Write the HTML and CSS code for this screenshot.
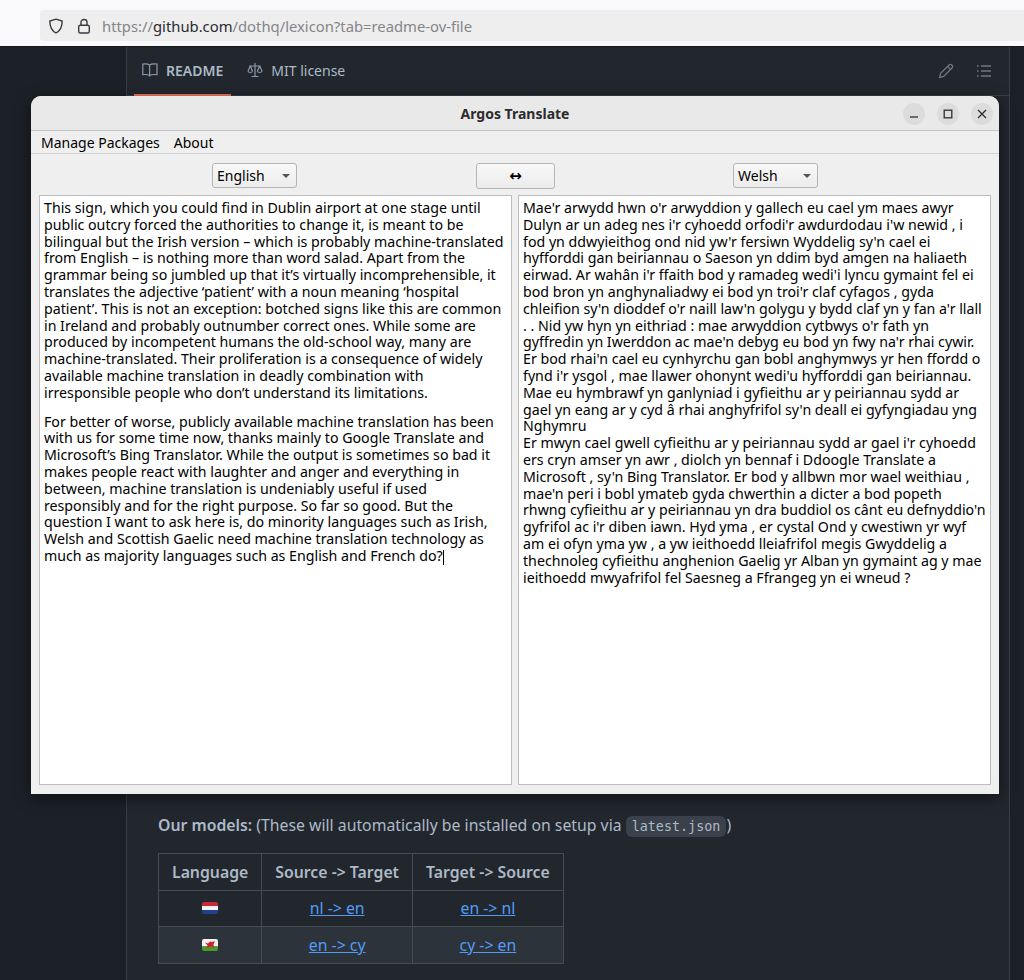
FILE: index.html
```html
<!DOCTYPE html>
<html lang="en">
<head>
    <meta charset="UTF-8">
    <meta name="viewport" content="width=device-width, initial-scale=1.0">
    <title>Argos Translate</title>
    <link rel="stylesheet" href="styles.css">
</head>
<body>

    <!-- Browser toolbar -->
    <div class="toolbar">
        <div class="urlbar">
            <svg class="url-icon" width="18" height="18" viewBox="0 0 18 18" fill="none" stroke="#3a3a3f" stroke-width="1.4">
                <path d="M9 2.2 L15.2 4 C15.2 10 13.6 13.6 9 16 C4.4 13.6 2.8 10 2.8 4 Z"/>
            </svg>
            <svg class="url-icon" width="16" height="18" viewBox="0 0 16 18" fill="none" stroke="#3a3a3f" stroke-width="1.4">
                <rect x="2.7" y="8.2" width="10.6" height="7.8" rx="1.6"/>
                <path d="M5 8 V5.2 C5 1.6 11 1.6 11 5.2 V8"/>
            </svg>
            <span class="url-text">https://<b>github.com</b>/dothq/lexicon?tab=readme-ov-file</span>
        </div>
    </div>

    <!-- GitHub page behind the window -->
    <div class="page">
        <div class="readme">
            <div class="readme-nav">
                <div class="tab tab-active">
                    <svg width="16" height="16" viewBox="0 0 16 16" fill="none" stroke="#8b98a8" stroke-width="1.2">
                        <path d="M7.6 3 C6 1.8 3 1.8 0.8 2 V12.6 C3 12.4 6 12.4 7.6 13.6 C9.2 12.4 12.6 12.4 15 12.6 V2 C12.6 1.8 9.2 1.8 7.6 3 Z M7.6 3 V14.6"/>
                    </svg>
                    README
                </div>
                <div class="tab">
                    <svg width="16" height="16" viewBox="0 0 16 16" fill="none" stroke="#8b98a8" stroke-width="1.2">
                        <path d="M8 1 V14.5 M4.6 14.5 H11.4 M2.2 4 H13.8 M3.4 4 L1 9 C1.4 11 5 11 5.4 9 L3.4 4 M12.6 4 L10.4 9 C10.8 11 14.6 11 15 9 L12.6 4"/>
                    </svg>
                    MIT license
                </div>
                <div class="nav-tools">
                    <svg width="16" height="16" viewBox="0 0 16 16" fill="none" stroke="#6e7885" stroke-width="1.3">
                        <path d="M1.6 14.4 L2.6 10.4 L10.8 2.2 C11.8 1.2 13 1.2 13.8 2 C14.8 3 14.8 4.2 13.8 5.2 L5.6 13.4 Z M9.6 3.4 L12.6 6.4"/>
                    </svg>
                    <svg width="16" height="16" viewBox="0 0 16 16" fill="none" stroke="#6e7885" stroke-width="1.3">
                        <path d="M5 3 H15 M5 8 H15 M5 13 H15 M1 3 H2.6 M1 8 H2.6 M1 13 H2.6"/>
                    </svg>
                </div>
            </div>
            <div class="readme-body">
                <p class="models"><b>Our models:</b> (These will automatically be installed on setup via <code>latest.json</code>)</p>
                <table class="models-table">
                    <tr>
                        <th>Language</th>
                        <th>Source -&gt; Target</th>
                        <th>Target -&gt; Source</th>
                    </tr>
                    <tr>
                        <td>
                            <svg class="flag" width="16" height="12" viewBox="0 0 16 12">
                                <rect width="16" height="4" fill="#c8273c"/>
                                <rect y="4" width="16" height="4" fill="#f2f2f2"/>
                                <rect y="8" width="16" height="4" fill="#22408c"/>
                            </svg>
                        </td>
                        <td><a href="#">nl -&gt; en</a></td>
                        <td><a href="#">en -&gt; nl</a></td>
                    </tr>
                    <tr class="row-alt">
                        <td>
                            <svg class="flag" width="16" height="12" viewBox="0 0 16 12">
                                <rect width="16" height="7.5" fill="#f2f2f2"/>
                                <rect y="7.5" width="16" height="4.5" fill="#4c9a2a"/>
                                <path d="M3 3.5 L6 4.5 L8 2.5 L10 3 L13 2 L11.5 5.5 L12 9 L10 7.5 L7 8 L5 9.5 L5.5 6.5 Z" fill="#d0202e"/>
                            </svg>
                        </td>
                        <td><a href="#">en -&gt; cy</a></td>
                        <td><a href="#">cy -&gt; en</a></td>
                    </tr>
                </table>
            </div>
        </div>
    </div>

    <!-- Argos Translate window -->
    <div class="window">
        <div class="titlebar">
            <span class="title">Argos Translate</span>
            <div class="win-buttons">
                <div class="win-btn">
                    <svg width="10" height="10" viewBox="0 0 10 10" fill="none" stroke="#2e2e2e" stroke-width="1.3"><path d="M1 8 H9"/></svg>
                </div>
                <div class="win-btn">
                    <svg width="10" height="10" viewBox="0 0 10 10" fill="none" stroke="#2e2e2e" stroke-width="1.3"><rect x="1.2" y="1.2" width="7.6" height="7.6"/></svg>
                </div>
                <div class="win-btn">
                    <svg width="10" height="10" viewBox="0 0 10 10" fill="none" stroke="#2e2e2e" stroke-width="1.3"><path d="M1 1 L9 9 M9 1 L1 9"/></svg>
                </div>
            </div>
        </div>
        <div class="menubar">
            <span>Manage Packages</span>
            <span>About</span>
        </div>
        <div class="controls">
            <div class="combo combo-en">English<span class="caret"></span></div>
            <div class="swap">↔</div>
            <div class="combo combo-cy">Welsh<span class="caret"></span></div>
        </div>
        <div class="panes">
            <div class="pane">
                <p>This sign, which you could find in Dublin airport at one stage until<br>
                public outcry forced the authorities to change it, is meant to be<br>
                bilingual but the Irish version – which is probably machine-translated<br>
                from English – is nothing more than word salad. Apart from the<br>
                grammar being so jumbled up that it’s virtually incomprehensible, it<br>
                translates the adjective ‘patient’ with a noun meaning ‘hospital<br>
                patient’. This is not an exception: botched signs like this are common<br>
                in Ireland and probably outnumber correct ones. While some are<br>
                produced by incompetent humans the old-school way, many are<br>
                machine-translated. Their proliferation is a consequence of widely<br>
                available machine translation in deadly combination with<br>
                irresponsible people who don’t understand its limitations.</p>
                <p>For better of worse, publicly available machine translation has been<br>
                with us for some time now, thanks mainly to Google Translate and<br>
                Microsoft’s Bing Translator. While the output is sometimes so bad it<br>
                makes people react with laughter and anger and everything in<br>
                between, machine translation is undeniably useful if used<br>
                responsibly and for the right purpose. So far so good. But the<br>
                question I want to ask here is, do minority languages such as Irish,<br>
                Welsh and Scottish Gaelic need machine translation technology as<br>
                much as majority languages such as English and French do?<span class="cursor"></span></p>
            </div>
            <div class="pane">
                <p>Mae'r arwydd hwn o'r arwyddion y gallech eu cael ym maes awyr<br>
                Dulyn ar un adeg nes i'r cyhoedd orfodi'r awdurdodau i'w newid , i<br>
                fod yn ddwyieithog ond nid yw'r fersiwn Wyddelig sy'n cael ei<br>
                hyfforddi gan beiriannau o Saeson yn ddim byd amgen na haliaeth<br>
                eirwad. Ar wahân i'r ffaith bod y ramadeg wedi'i lyncu gymaint fel ei<br>
                bod bron yn anghynaliadwy ei bod yn troi'r claf cyfagos , gyda<br>
                chleifion sy'n dioddef o'r naill law'n golygu y bydd claf yn y fan a'r llall<br>
                . . Nid yw hyn yn eithriad : mae arwyddion cytbwys o'r fath yn<br>
                gyffredin yn Iwerddon ac mae'n debyg eu bod yn fwy na'r rhai cywir.<br>
                Er bod rhai'n cael eu cynhyrchu gan bobl anghymwys yr hen ffordd o<br>
                fynd i'r ysgol , mae llawer ohonynt wedi'u hyfforddi gan beiriannau.<br>
                Mae eu hymbrawf yn ganlyniad i gyfieithu ar y peiriannau sydd ar<br>
                gael yn eang ar y cyd â rhai anghyfrifol sy'n deall ei gyfyngiadau yng<br>
                Nghymru<br>
                Er mwyn cael gwell cyfieithu ar y peiriannau sydd ar gael i'r cyhoedd<br>
                ers cryn amser yn awr , diolch yn bennaf i Ddoogle Translate a<br>
                Microsoft , sy'n Bing Translator. Er bod y allbwn mor wael weithiau ,<br>
                mae'n peri i bobl ymateb gyda chwerthin a dicter a bod popeth<br>
                rhwng cyfieithu ar y peiriannau yn dra buddiol os cânt eu defnyddio'n<br>
                gyfrifol ac i'r diben iawn. Hyd yma , er cystal Ond y cwestiwn yr wyf<br>
                am ei ofyn yma yw , a yw ieithoedd lleiafrifol megis Gwyddelig a<br>
                thechnoleg cyfieithu anghenion Gaelig yr Alban yn gymaint ag y mae<br>
                ieithoedd mwyafrifol fel Saesneg a Ffrangeg yn ei wneud ?</p>
            </div>
        </div>
    </div>

</body>
</html>
```

FILE: styles.css
```css
* {
    margin: 0;
    padding: 0;
    box-sizing: border-box;
}

html, body {
    height: 980px;
    overflow: hidden;
}

body {
    background: #1c2128;
    font-family: "Noto Sans", sans-serif;
}

/* Browser toolbar */
.toolbar {
    height: 47px;
    padding: 10px 0 5px 40px;
    background: #f9f9fb;
    border-bottom: 1px solid #15181d;
}

.urlbar {
    display: flex;
    align-items: center;
    height: 31px;
    padding-left: 7px;
    gap: 11px;
    background: #eeeeee;
    border-radius: 4px 0 0 4px;
}

.url-text {
    margin-left: -1px;
    padding-top: 1px;
    font-size: 14.8px;
    color: #85858a;
}

.url-text b {
    font-weight: 400;
    color: #2b2b30;
}

/* GitHub page */
.page {
    margin-left: 126px;
    width: 884px;
    height: 933px;
    background: #22272e;
    border-left: 1px solid #373e47;
    border-right: 1px solid #373e47;
}

.readme-nav {
    display: flex;
    align-items: center;
    height: 49px;
    padding-left: 7px;
    border-bottom: 1px solid #373e47;
}

.tab {
    display: flex;
    align-items: center;
    gap: 8px;
    height: 49px;
    padding: 0 8px;
    margin-right: 8px;
    font-size: 14px;
    color: #adbac7;
    border-bottom: 2px solid transparent;
}

.tab-active {
    font-weight: 600;
    border-bottom-color: #ec775c;
}

.nav-tools {
    display: flex;
    gap: 22px;
    margin-left: auto;
    margin-right: 17px;
}

.readme-body {
    padding: 717px 31px 0;
    color: #adbac7;
}

.models {
    font-size: 15.8px;
    line-height: 24px;
    margin-bottom: 14px;
}

.models b {
    font-weight: 600;
}

code {
    padding: 3px 6px;
    font-family: "DejaVu Sans Mono", monospace;
    font-size: 13.4px;
    background: #3a414b;
    border-radius: 6px;
}

.models-table {
    border-collapse: collapse;
    font-size: 15.8px;
}

.models-table th, .models-table td {
    height: 36.5px;
    padding: 0 13px;
    text-align: center;
    border: 1px solid #444c56;
}

.models-table th {
    font-weight: 600;
}

.models-table a {
    color: #539bf5;
}

.row-alt td {
    background: #2d333b;
}

.flag {
    display: block;
    margin: 0 auto;
    border-radius: 2px;
}

/* Argos Translate window */
.window {
    position: absolute;
    top: 96px;
    left: 31px;
    width: 968px;
    height: 698px;
    display: flex;
    flex-direction: column;
    background: #efefef;
    border-radius: 10px 10px 0 0;
    box-shadow: 0 4px 16px rgba(0, 0, 0, 0.5);
    color: #000;
    font-size: 14px;
}

.titlebar {
    position: relative;
    display: flex;
    justify-content: center;
    align-items: center;
    height: 35px;
    flex-shrink: 0;
    background: #e9e9e9;
    border-bottom: 1px solid #c6c6c6;
    border-radius: 10px 10px 0 0;
}

.title {
    font-weight: 700;
    font-size: 14px;
    color: #2c2c2c;
}

.win-buttons {
    position: absolute;
    top: 7px;
    right: 6px;
    display: flex;
    gap: 12px;
}

.win-btn {
    display: flex;
    justify-content: center;
    align-items: center;
    width: 22px;
    height: 22px;
    border-radius: 50%;
    background: #dcdcdc;
}

.menubar {
    display: flex;
    gap: 14px;
    height: 23px;
    align-items: center;
    flex-shrink: 0;
    padding-left: 10px;
    border-bottom: 1px solid #d2d2d2;
}

.controls {
    height: 41px;
    flex-shrink: 0;
    display: flex;
    align-items: center;
    padding-top: 2px;
}

.combo {
    position: relative;
    height: 25px;
    width: 85px;
    padding: 2px 4px;
    background: linear-gradient(#f8f8f8, #ececec);
    border: 1px solid #b5b5b5;
    border-radius: 3px;
}

.combo-en {
    margin-left: 181px;
}

.combo-cy {
    margin-left: 178px;
}

.caret {
    position: absolute;
    top: 10px;
    right: 6px;
    border-left: 4px solid transparent;
    border-right: 4px solid transparent;
    border-top: 4px solid #555;
}

.swap {
    width: 79px;
    height: 26px;
    margin-left: 179px;
    text-align: center;
    font-family: "DejaVu Sans", sans-serif;
    font-size: 15px;
    font-weight: 700;
    line-height: 24px;
    background: linear-gradient(#f8f8f8, #ececec);
    border: 1px solid #b5b5b5;
    border-radius: 3px;
}

.panes {
    flex: 1;
    display: flex;
    gap: 6px;
    padding: 0 8px 9px;
}

.pane {
    flex: 1;
    padding: 4px;
    background: #fff;
    border: 1px solid #bdbdbd;
    font-size: 14.2px;
    line-height: 16.8px;
    white-space: nowrap;
}

.pane p + p {
    margin-top: 12px;
}

.cursor {
    display: inline-block;
    width: 1px;
    height: 15px;
    background: #000;
    vertical-align: text-bottom;
}
```
